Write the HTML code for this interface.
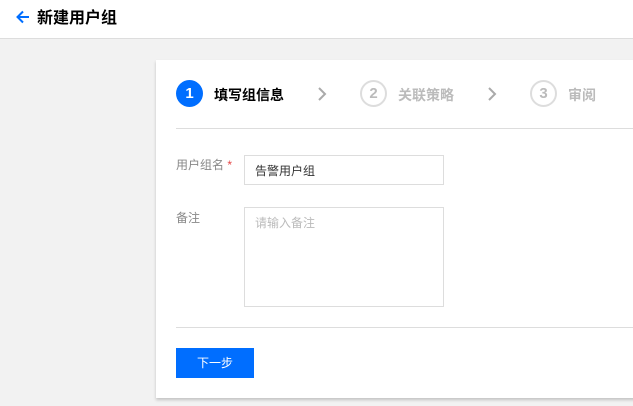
<!DOCTYPE html>
<html><head><meta charset="utf-8"><style>
*{margin:0;padding:0;box-sizing:border-box}
body{width:633px;height:406px;overflow:hidden;background:#f2f2f2;font-family:"Liberation Sans","Noto Sans CJK SC",sans-serif;position:relative}
.hd{position:absolute;left:0;top:0;width:633px;height:39px;background:#fff;border-bottom:1px solid #ddd}
.hd .t{position:absolute;left:37px;top:4px;font-size:16px;font-weight:bold;color:#000}
.card{position:absolute;left:156px;top:60px;width:490px;height:338px;background:#fff;box-shadow:0 2px 3px rgba(0,0,0,.2)}
.a{position:absolute}
.c{position:absolute;width:27px;height:27px;border-radius:50%;font-size:15px;font-weight:bold;text-align:center;line-height:27px}
.c1{background:#006eff;color:#fff}
.c2{border:2px solid #ddd;color:#bbb;line-height:23px}
.st{position:absolute;font-size:14px;font-weight:bold;top:86px}
.hr{position:absolute;left:20px;right:0;height:1px;background:#ddd}
.lb{position:absolute;font-size:12px;color:#888}
.box{position:absolute;border:1px solid #ddd;font-size:12px}
</style></head><body>
<div class="hd">
<svg class="a" style="left:14px;top:8px" width="18" height="18" viewBox="0 0 18 18"><path d="M15 9H4M9 3.5L3.5 9 9 14.5" stroke="#006eff" stroke-width="2" fill="none"/></svg>
<div class="t">新建用户组</div>
</div>
<div class="card">
<div class="c c1" style="left:20px;top:20px">1</div>
<div class="st" style="left:58px;top:25px;color:#000">填写组信息</div>
<svg class="a" style="left:161px;top:27px" width="10" height="14"><path d="M2 1l6 6-6 6" stroke="#aaa" stroke-width="2" fill="none"/></svg>
<div class="c c2" style="left:204px;top:20px">2</div>
<div class="st" style="left:242px;top:25px;color:#bbb">关联策略</div>
<svg class="a" style="left:331px;top:27px" width="10" height="14"><path d="M2 1l6 6-6 6" stroke="#aaa" stroke-width="2" fill="none"/></svg>
<div class="c c2" style="left:374px;top:20px">3</div>
<div class="st" style="left:412px;top:25px;color:#bbb">审阅</div>
<div class="hr" style="top:68px"></div>
<div class="lb" style="left:20px;top:96px">用户组名 <span style="color:#e54545">*</span></div>
<div class="box" style="left:88px;top:95px;width:200px;height:30px;padding:6px 10px;color:#333;font-size:12px">告警用户组</div>
<div class="lb" style="left:20px;top:149px">备注</div>
<div class="box" style="left:88px;top:147px;width:200px;height:100px;padding:6px 10px;color:#bbb">请输入备注</div>
<div class="hr" style="top:267px"></div>
<div class="a" style="left:20px;top:288px;width:78px;height:30px;background:#006eff;color:#fff;font-size:12px;text-align:center;line-height:30px">下一步</div>
</div>
</body></html>
